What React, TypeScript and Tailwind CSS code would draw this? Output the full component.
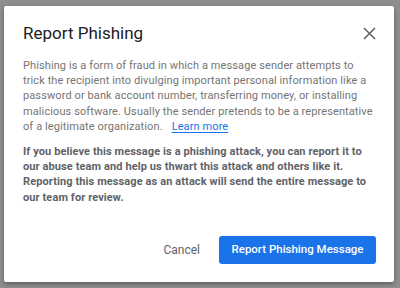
import React from "react";

export default function App() {
  return (
    <div
      className="w-[400px] h-[288px] bg-[#8e8e8e] pt-[6px] pl-[4px] overflow-hidden"
      style={{ fontFamily: "Roboto, 'Liberation Sans', Arial, sans-serif" }}
    >
      <div className="w-[390px] h-[276px] bg-white rounded-[2px] shadow-[0_2px_4px_rgba(0,0,0,0.35)] flex flex-col pl-[19px] pr-[18px]">
        <div className="flex items-center justify-between pt-[16px] h-[38px]">
          <div className="text-[17px] leading-[22px] text-[#202124]">Report Phishing</div>
          <svg width="13" height="13" viewBox="0 0 13 13">
            <path d="M1 1 L12 12 M12 1 L1 12" stroke="#5f6368" strokeWidth="1.6" fill="none" />
          </svg>
        </div>
        <p className="mt-[14px] text-[11px] leading-[15.2px] text-[#757575] tracking-[0.1px]">
          Phishing is a form of fraud in which a message sender attempts to trick the recipient into divulging important personal information like a password or bank account number, transferring money, or installing malicious software. Usually the sender pretends to be a representative of a legitimate organization.
          <a className="ml-[9px] text-[#1a73e8] underline underline-offset-2">Learn more</a>
        </p>
        <p className="mt-[10px] text-[11px] leading-[15.2px] text-[#5f6368] font-bold tracking-[0.1px]">
          If you believe this message is a phishing attack, you can report it to our abuse team and help us thwart this attack and others like it. Reporting this message as an attack will send the entire message to our team for review.
        </p>
        <div className="mt-auto mb-[18px] flex items-center justify-end">
          <button className="text-[12px] text-[#5f6368] mr-[19px]">Cancel</button>
          <button className="w-[157px] h-[28px] rounded-[3px] bg-[#1a73e8] text-white text-[11.5px] font-medium">
            Report Phishing Message
          </button>
        </div>
      </div>
    </div>
  );
}
